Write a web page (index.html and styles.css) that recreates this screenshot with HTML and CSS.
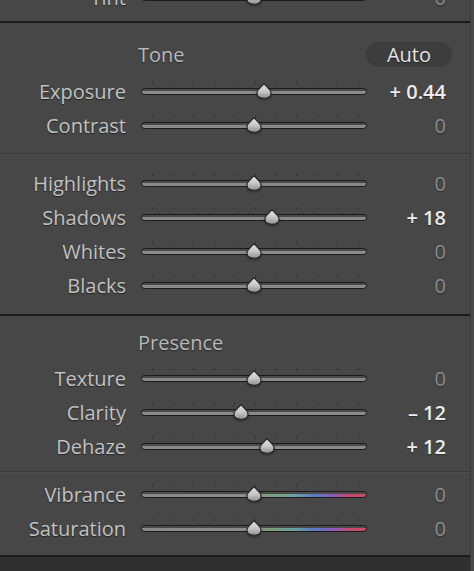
FILE: index.html
```html
<!DOCTYPE html>
<html>
<head>
<meta charset="utf-8">
<link rel="stylesheet" href="styles.css">
</head>
<body>
<svg class="defs" width="0" height="0" aria-hidden="true">
  <defs>
    <linearGradient id="tg" x1="0" y1="0" x2="0" y2="1">
      <stop offset="0" stop-color="#e6e6e6"/>
      <stop offset="0.55" stop-color="#c4c4c4"/>
      <stop offset="1" stop-color="#8e8e8e"/>
    </linearGradient>
    <symbol id="thumb" viewBox="0 0 16 16">
      <path d="M8 0.8 C9.6 3.2 15 6.2 15 10.2 C15 13.6 12.2 15.2 8 15.2 C3.8 15.2 1 13.6 1 10.2 C1 6.2 6.4 3.2 8 0.8 Z" fill="url(#tg)" stroke="#262626" stroke-width="1.1"/>
    </symbol>
  </defs>
</svg>
<div class="page">
  <div class="panel">
    <section class="group group-top">
      <div class="row">
        <span class="label">Tint</span>
        <div class="slider"><div class="ticks"></div><div class="track"></div><svg class="thumb" style="left:50%" viewBox="0 0 16 16"><use href="#thumb"/></svg></div>
        <span class="value">0</span>
      </div>
    </section>
    <div class="rule-dark"></div>

    <section class="group group-tone">
      <div class="header"><span class="title">Tone</span><span class="auto">Auto</span></div>
      <div class="row">
        <span class="label">Exposure</span>
        <div class="slider"><div class="ticks"></div><div class="track"></div><svg class="thumb" style="left:54.4%" viewBox="0 0 16 16"><use href="#thumb"/></svg></div>
        <span class="value active">+ 0.44</span>
      </div>
      <div class="row">
        <span class="label">Contrast</span>
        <div class="slider"><div class="ticks"></div><div class="track"></div><svg class="thumb" style="left:50%" viewBox="0 0 16 16"><use href="#thumb"/></svg></div>
        <span class="value">0</span>
      </div>
    </section>
    <div class="rule-faint"></div>

    <section class="group group-light">
      <div class="row">
        <span class="label">Highlights</span>
        <div class="slider"><div class="ticks"></div><div class="track"></div><svg class="thumb" style="left:50%" viewBox="0 0 16 16"><use href="#thumb"/></svg></div>
        <span class="value">0</span>
      </div>
      <div class="row">
        <span class="label">Shadows</span>
        <div class="slider"><div class="ticks"></div><div class="track"></div><svg class="thumb" style="left:58%" viewBox="0 0 16 16"><use href="#thumb"/></svg></div>
        <span class="value active">+ 18</span>
      </div>
      <div class="row">
        <span class="label">Whites</span>
        <div class="slider"><div class="ticks"></div><div class="track"></div><svg class="thumb" style="left:50%" viewBox="0 0 16 16"><use href="#thumb"/></svg></div>
        <span class="value">0</span>
      </div>
      <div class="row">
        <span class="label">Blacks</span>
        <div class="slider"><div class="ticks"></div><div class="track"></div><svg class="thumb" style="left:50%" viewBox="0 0 16 16"><use href="#thumb"/></svg></div>
        <span class="value">0</span>
      </div>
    </section>
    <div class="rule-dark"></div>

    <section class="group group-presence">
      <div class="header"><span class="title">Presence</span></div>
      <div class="row">
        <span class="label">Texture</span>
        <div class="slider"><div class="ticks"></div><div class="track"></div><svg class="thumb" style="left:50%" viewBox="0 0 16 16"><use href="#thumb"/></svg></div>
        <span class="value">0</span>
      </div>
      <div class="row">
        <span class="label">Clarity</span>
        <div class="slider"><div class="ticks"></div><div class="track"></div><svg class="thumb" style="left:44.2%" viewBox="0 0 16 16"><use href="#thumb"/></svg></div>
        <span class="value active">– 12</span>
      </div>
      <div class="row">
        <span class="label">Dehaze</span>
        <div class="slider"><div class="ticks"></div><div class="track"></div><svg class="thumb" style="left:55.8%" viewBox="0 0 16 16"><use href="#thumb"/></svg></div>
        <span class="value active">+ 12</span>
      </div>
    </section>
    <div class="rule-faint"></div>

    <section class="group group-color">
      <div class="row">
        <span class="label">Vibrance</span>
        <div class="slider"><div class="ticks"></div><div class="track track-color"></div><svg class="thumb" style="left:50%" viewBox="0 0 16 16"><use href="#thumb"/></svg></div>
        <span class="value">0</span>
      </div>
      <div class="row">
        <span class="label">Saturation</span>
        <div class="slider"><div class="ticks"></div><div class="track track-color"></div><svg class="thumb" style="left:50%" viewBox="0 0 16 16"><use href="#thumb"/></svg></div>
        <span class="value">0</span>
      </div>
    </section>
    <div class="rule-dark"></div>
    <div class="footer"></div>
  </div>
</div>
</body>
</html>
```

FILE: styles.css
```css
html, body {
  margin: 0;
  padding: 0;
  height: 100%;
  background: #494949;
  overflow: hidden;
}

.defs {
  position: absolute;
  width: 0;
  height: 0;
}

.page {
  height: 100%;
  display: flex;
}

.panel {
  width: 470px;
  height: 100%;
  display: flex;
  flex-direction: column;
  background: #474747;
  border-right: 1px solid #3a3a3a;
  font-family: "Open Sans", "Noto Sans", sans-serif;
  font-size: 20px;
  color: #c2c2c2;
}

.group {
  display: flex;
  flex-direction: column;
}

.group-top {
  margin-top: -20px;
  padding-bottom: 7px;
}

.group-tone {
  padding-top: 17px;
  padding-bottom: 11px;
}

.group-light {
  padding-top: 11px;
  padding-bottom: 12px;
}

.group-presence {
  padding-top: 12px;
  padding-bottom: 8px;
}

.group-color {
  padding-top: 4px;
  padding-bottom: 10px;
}

.rule-dark {
  height: 2px;
  background: #1c1c1c;
  flex: none;
}

.rule-faint {
  height: 1px;
  background: #3a3a3a;
  border-bottom: 1px solid #4d4d4d;
  flex: none;
}

.footer {
  flex: 1;
  background: #303030;
}

.header {
  height: 28px;
  display: flex;
  align-items: center;
  padding-left: 138px;
  padding-right: 18px;
}

.group-tone .header {
  margin-bottom: 6px;
}

.group-presence .header {
  margin-bottom: 5px;
}

.title {
  flex: 1;
  color: #b8b8b8;
  text-shadow: 0 1px 1px rgba(0, 0, 0, 0.45);
}

.auto {
  width: 86px;
  height: 25px;
  border-radius: 13px;
  background: #3d3d3d;
  color: #e4e4e4;
  display: flex;
  align-items: center;
  justify-content: center;
  text-shadow: 0 1px 1px rgba(0, 0, 0, 0.5);
}

.row {
  height: 34px;
  display: flex;
  align-items: center;
}

.label {
  width: 126px;
  text-align: right;
  flex: none;
  text-shadow: 0 1px 1px rgba(0, 0, 0, 0.5);
}

.slider {
  position: relative;
  width: 226px;
  height: 22px;
  margin-left: 15px;
  flex: none;
}

.ticks {
  position: absolute;
  left: 11px;
  top: 1px;
  width: 207px;
  height: 3px;
  background: repeating-linear-gradient(to right, #333 0 1px, transparent 1px 20.6px);
  opacity: 0.8;
}

.track {
  position: absolute;
  left: 0;
  right: 0;
  top: 8px;
  height: 5px;
  border: 1px solid #1b1b1b;
  border-radius: 4px;
  background: linear-gradient(#4a4a4a 0 35%, #8a8a8a 35% 100%);
}

.track-color {
  background:
    linear-gradient(#4a4a4a 0 35%, transparent 35% 100%),
    linear-gradient(to right, #8a8a8a 0%, #8c8c8c 47%, #7e9e7a 58%, #6aa39c 67%, #5a7cc4 77%, #8a5cbc 85%, #c24a78 92%, #cf4a5a 100%);
}

.thumb {
  position: absolute;
  top: 3px;
  width: 16px;
  height: 16px;
  margin-left: -8px;
  filter: drop-shadow(0 1px 1px rgba(0, 0, 0, 0.4));
}

.value {
  flex: 1;
  text-align: right;
  padding-right: 24px;
  color: #8c8c8c;
  text-shadow: 0 1px 1px rgba(0, 0, 0, 0.4);
}

.value.active {
  color: #ececec;
  font-weight: 600;
}
```
